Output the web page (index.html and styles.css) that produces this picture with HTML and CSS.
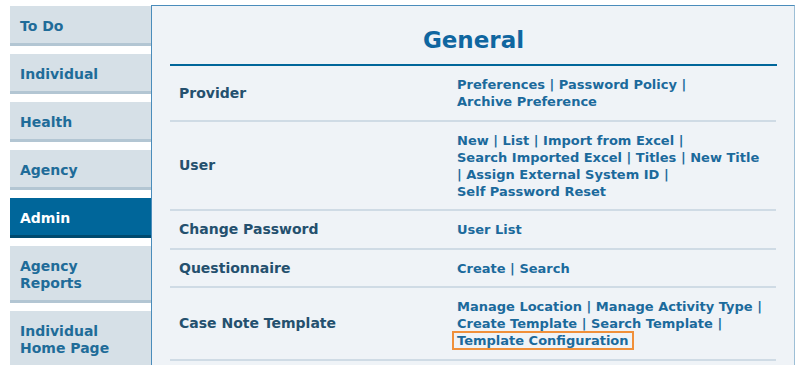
FILE: index.html
```html
<!DOCTYPE html>
<html lang="en">
<head>
  <meta charset="UTF-8" />
  <title>Admin - General</title>
  <link rel="stylesheet" href="styles.css">
</head>
<body>
  <div class="page">
    <ul class="tabs">
      <li><a href="#">To Do</a></li>
      <li><a href="#">Individual</a></li>
      <li><a href="#">Health</a></li>
      <li><a href="#">Agency</a></li>
      <li class="active"><a href="#">Admin</a></li>
      <li><a href="#">Agency<br>Reports</a></li>
      <li><a href="#">Individual<br>Home Page</a></li>
    </ul>

    <div class="panel">
      <h1>General</h1>
      <table class="menu">
        <tr>
          <th>Provider</th>
          <td>
            <a href="#">Preferences</a> | <a href="#">Password Policy</a> |<br>
            <a href="#">Archive Preference</a>
          </td>
        </tr>
        <tr>
          <th>User</th>
          <td>
            <a href="#">New</a> | <a href="#">List</a> | <a href="#">Import from Excel</a> |<br>
            <a href="#">Search Imported Excel</a> | <a href="#">Titles</a> | <a href="#">New Title</a><br>
            | <a href="#">Assign External System ID</a> |<br>
            <a href="#">Self Password Reset</a>
          </td>
        </tr>
        <tr>
          <th>Change Password</th>
          <td><a href="#">User List</a></td>
        </tr>
        <tr>
          <th>Questionnaire</th>
          <td><a href="#">Create</a> | <a href="#">Search</a></td>
        </tr>
        <tr>
          <th>Case Note Template</th>
          <td>
            <a href="#">Manage Location</a> | <a href="#">Manage Activity Type</a> |<br>
            <a href="#">Create Template</a> | <a href="#">Search Template</a> |<br>
            <a href="#" class="focus">Template Configuration</a>
          </td>
        </tr>
      </table>
    </div>
  </div>
</body>
</html>
```

FILE: styles.css
```css
body {
  margin: 0;
  background: #fff;
  font-family: "DejaVu Sans", Verdana, sans-serif;
  font-weight: bold;
  overflow: hidden;
}

.page {
  display: flex;
  align-items: flex-start;
}

.tabs {
  list-style: none;
  margin: 6px 0 0 10px;
  padding: 0;
  width: 141px;
}

.tabs li {
  background: #d6e0e7;
  border-bottom: 3px solid #b3c6d3;
  margin-bottom: 8px;
}

.tabs a {
  display: block;
  padding: 12px 10px 8px;
  font-size: 14px;
  line-height: 17px;
  color: #1f6c99;
  text-decoration: none;
}

.tabs .active {
  background: #00669a;
  border-bottom-color: #004a6e;
}

.tabs .active a {
  color: #fff;
}

.panel {
  margin-top: 5px;
  width: 642px;
  min-height: 420px;
  background: #eff3f7;
  border: 1px solid #4a8cbb;
  border-right-color: #9dbfd6;
  border-bottom: 0;
}

h1 {
  margin: 0 17px 0 18px;
  padding: 21px 0 10px;
  text-align: center;
  font-size: 23px;
  line-height: 27px;
  color: #0f66a0;
  border-bottom: 2px solid #00669a;
}

.menu {
  margin: 0 17px 0 18px;
  width: 606px;
  border-collapse: collapse;
  font-size: 13px;
  line-height: 17px;
}

.menu tr {
  border-bottom: 2px solid #cfdbe5;
}

.menu th {
  width: 260px;
  padding: 10px 9px 9.5px;
  text-align: left;
  font-size: 14px;
  color: #24506e;
}

.menu td {
  padding: 10px 9px 9.5px;
  color: #1b6a9c;
  white-space: nowrap;
}

.menu a {
  color: #1b6a9c;
  text-decoration: none;
}

.menu .focus {
  padding: 0 3px;
  margin-left: -5px;
  border: 2px solid #f0903a;
}
```
